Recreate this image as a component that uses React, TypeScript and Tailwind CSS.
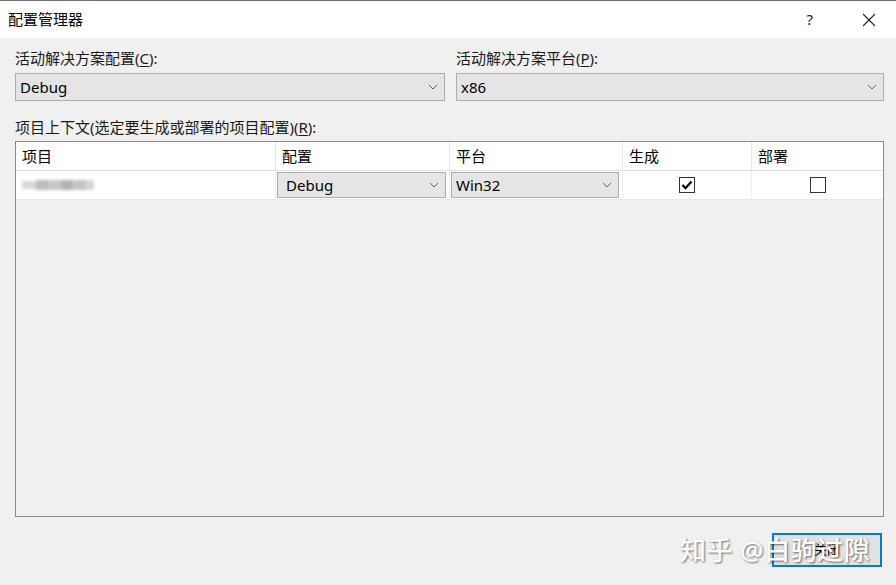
import React from "react";

const font = { fontFamily: '"Noto Sans", "Noto Sans CJK SC", sans-serif' };

function Chevron() {
  return (
    <svg width="10" height="6" viewBox="0 0 10 6" className="shrink-0">
      <polyline points="1,1 5,5 9,1" fill="none" stroke="#606060" strokeWidth="1" />
    </svg>
  );
}

function Select({ value, className }: { value: string; className: string }) {
  return (
    <div className={`flex items-center justify-between border border-[#adadad] bg-[#e5e5e5] pl-[4px] pr-[6px] text-[15px] text-black ${className}`}>
      <span>{value}</span>
      <Chevron />
    </div>
  );
}

export default function App() {
  return (
    <div
      className="relative flex h-[585px] w-[896px] flex-col overflow-hidden border-t border-[#707070] bg-[#f0f0f0] text-black"
      style={font}
    >
      {/* Title bar */}
      <div className="flex h-[37px] items-center bg-white pl-[8px]">
        <span className="text-[15px]">配置管理器</span>
        <div className="ml-auto flex items-center">
          <span className="mr-[49px] text-[15px] text-[#222]">?</span>
          <svg width="14" height="14" viewBox="0 0 14 14" className="mr-[20px]">
            <line x1="1" y1="1" x2="13" y2="13" stroke="#222" strokeWidth="1.1" />
            <line x1="13" y1="1" x2="1" y2="13" stroke="#222" strokeWidth="1.1" />
          </svg>
        </div>
      </div>

      <div className="flex flex-col pl-[15px] pr-[12px] pt-[10px]">
        <div className="grid grid-cols-[430px_428px] gap-x-[11px]">
          <div className="flex flex-col">
            <div className="h-[20px] text-[15px] leading-[20px] text-[#1a1a1a]">
              活动解决方案配置(<span className="underline underline-offset-2">C</span>):
            </div>
            <Select value="Debug" className="mt-[5px] h-[28px]" />
          </div>
          <div className="flex flex-col">
            <div className="h-[20px] text-[15px] leading-[20px] text-[#1a1a1a]">
              活动解决方案平台(<span className="underline underline-offset-2">P</span>):
            </div>
            <Select value="x86" className="mt-[5px] h-[28px]" />
          </div>
        </div>

        <div className="mt-[16px] h-[20px] text-[15px] leading-[20px] text-[#1a1a1a]">
          项目上下文(选定要生成或部署的项目配置)(<span className="underline underline-offset-2">R</span>):
        </div>

        {/* Table */}
        <div className="mt-[4px] flex h-[376px] w-[869px] flex-col border border-[#8a8a8a] bg-[#f0f0f0]">
          <div className="grid h-[29px] grid-cols-[260px_174px_173px_129px_131px] border-b border-[#e0e0e0] bg-white text-[15px]">
            <div className="flex items-center border-r border-[#e5e5e5] pl-[6px]">项目</div>
            <div className="flex items-center border-r border-[#e5e5e5] pl-[6px]">配置</div>
            <div className="flex items-center border-r border-[#e5e5e5] pl-[6px]">平台</div>
            <div className="flex items-center border-r border-[#e5e5e5] pl-[6px]">生成</div>
            <div className="flex items-center pl-[6px]">部署</div>
          </div>
          <div className="grid h-[29px] grid-cols-[260px_174px_173px_129px_131px] border-b border-[#e8e8e8] bg-white">
            <div className="flex items-center border-r border-[#eeeeee]">
              <div className="ml-[6px] flex h-[10px] items-center blur-[1.5px]">
                <div className="h-[8px] w-[14px] bg-[#d8d8d8]" />
                <div className="h-[10px] w-[12px] bg-[#bdbdbd]" />
                <div className="h-[10px] w-[14px] bg-[#c8c8c8]" />
                <div className="h-[10px] w-[10px] bg-[#b0b0b0]" />
                <div className="h-[10px] w-[14px] bg-[#c4c4c4]" />
                <div className="h-[10px] w-[8px] bg-[#d6d6d6]" />
              </div>
            </div>
            <div className="flex items-center border-r border-[#eeeeee] pl-[1px] pr-[3px]">
              <Select value="Debug" className="h-[26px] w-full pl-[8px]" />
            </div>
            <div className="flex items-center border-r border-[#eeeeee] pl-[1px] pr-[3px]">
              <Select value="Win32" className="h-[26px] w-full pl-[4px]" />
            </div>
            <div className="flex items-center justify-center border-r border-[#eeeeee]">
              <div className="flex h-[16px] w-[16px] items-center justify-center border border-[#333] bg-white">
                <svg width="12" height="10" viewBox="0 0 12 10">
                  <polyline points="1.5,5 4.5,8.2 10.5,1.5" fill="none" stroke="#000" strokeWidth="2.2" />
                </svg>
              </div>
            </div>
            <div className="flex items-center justify-center">
              <div className="h-[16px] w-[16px] border border-[#333] bg-white" />
            </div>
          </div>
        </div>

        <div className="mt-[16px] flex">
          <button className="ml-auto mr-[2px] flex h-[34px] w-[110px] items-center justify-center border-2 border-[#0078d7] bg-[#e1e1e1] text-[13px] text-black">
            关闭
          </button>
        </div>
      </div>

      {/* Watermark */}
      <div className="absolute left-[680px] top-[530px] text-[26px] font-medium tracking-[0.5px] text-white [text-shadow:1px_1px_2px_rgba(0,0,0,0.55)]">
        知乎 @白驹过隙
      </div>
    </div>
  );
}
